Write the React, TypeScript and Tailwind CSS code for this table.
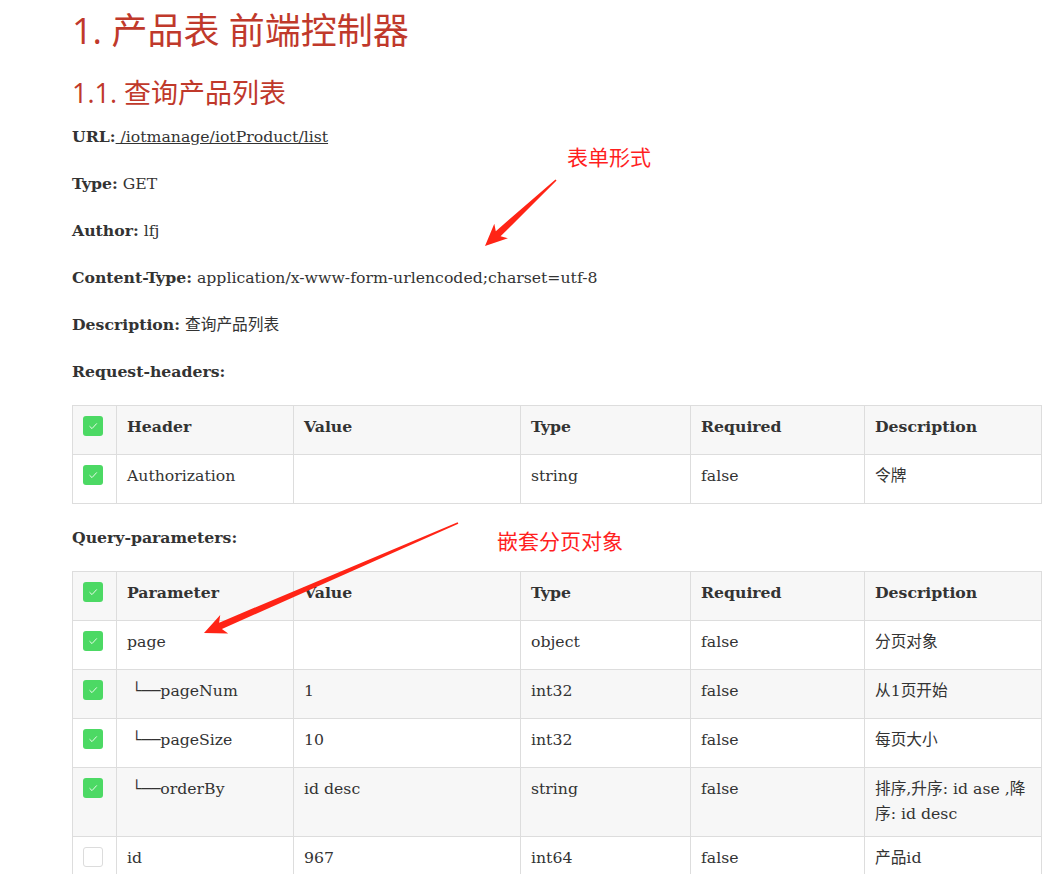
import React from 'react';

const body = "font-['DejaVu_Serif','Noto_Sans_CJK_SC',serif]";
const sans = "font-['Open_Sans','Noto_Sans_CJK_SC',sans-serif]";

type Row = { checked: boolean; cells: string[]; tall?: boolean; indent?: boolean };

const Check = ({ checked }: { checked: boolean }) =>
  checked ? (
    <div className="w-5 h-5 mt-[2px] rounded-[3px] bg-[#4cd964] flex items-center justify-center">
      <svg width="12" height="12" viewBox="0 0 12 12" fill="none">
        <path d="M2.5 6.2 L5 8.6 L9.8 3.4" stroke="#e8fbe9" strokeWidth="1" />
      </svg>
    </div>
  ) : (
    <div className="w-5 h-5 mt-[2px] rounded-[3px] bg-white border border-[#dcdcdc]" />
  );

const ApiTable = ({ head, rows }: { head: string[]; rows: Row[] }) => (
  <div className={`w-[970px] bg-[#dddddd] p-px grid gap-px text-[15.7px] text-[#333] ${body}`}>
    <div className="grid grid-cols-[43px_176px_226px_169px_173px_176px] gap-px h-[48px]">
      <div className="bg-[#f7f7f7] px-[10px] pt-[8px]"><Check checked /></div>
      {head.map((h) => (
        <div key={h} className="bg-[#f7f7f7] px-[10px] pt-[8px] leading-[25px] font-bold">{h}</div>
      ))}
    </div>
    {rows.map((r, i) => {
      const bg = i % 2 === 0 ? 'bg-white' : 'bg-[#f7f7f7]';
      return (
        <div
          key={i}
          className={`grid grid-cols-[43px_176px_226px_169px_173px_176px] gap-px ${r.tall ? 'h-[68px]' : 'h-[48px]'}`}
        >
          <div className={`${bg} px-[10px] pt-[8px]`}><Check checked={r.checked} /></div>
          {r.cells.map((c, j) => (
            <div key={j} className={`${bg} px-[10px] pt-[8px] leading-[25px]`}>
              {j === 0 && r.indent ? <span className="pl-[5px]">└──{c}</span> : c}
            </div>
          ))}
        </div>
      );
    })}
  </div>
);

// red screenshot-style arrow: thin tail, widening shaft, solid head
const Arrow = ({ x1, y1, x2, y2 }: { x1: number; y1: number; x2: number; y2: number }) => {
  const dx = x2 - x1;
  const dy = y2 - y1;
  const len = Math.hypot(dx, dy);
  const ux = dx / len;
  const uy = dy / len;
  const nx = -uy;
  const ny = ux;
  const headLen = 22;
  const headW = 10;
  const neckW = 3.5;
  const tailW = 0.8;
  const bx = x2 - ux * headLen;
  const by = y2 - uy * headLen;
  const pts = [
    [x1 + nx * tailW, y1 + ny * tailW],
    [bx + ux * 4 + nx * neckW, by + uy * 4 + ny * neckW],
    [bx + nx * headW, by + ny * headW],
    [x2, y2],
    [bx - nx * headW, by - ny * headW],
    [bx + ux * 4 - nx * neckW, by + uy * 4 - ny * neckW],
    [x1 - nx * tailW, y1 - ny * tailW],
  ];
  return <polygon points={pts.map((p) => p.join(',')).join(' ')} fill="#ff2416" />;
};

const Field = ({ label, children }: { label: string; children?: React.ReactNode }) => (
  <p className="leading-[24px] mb-[23px]">
    <span className="font-bold">{label}</span> {children}
  </p>
);

export default function App() {
  return (
    <div className={`relative w-[1057px] h-[874px] overflow-hidden bg-white text-[15.7px] text-[#333] ${body}`}>
      <div className="pl-[72px] pt-[9px]">
        <h1 className={`${sans} text-[36px] leading-[44px] text-[#c0392b] font-normal`}>1. 产品表 前端控制器</h1>
        <h2 className={`${sans} text-[27px] leading-[36px] text-[#c0392b] font-normal mt-[22px] mb-[14px]`}>1.1. 查询产品列表</h2>
        <p className="leading-[24px] mb-[23px]">
          <span className="font-bold">URL:</span>
          <a className="underline">&nbsp;/iotmanage/iotProduct/list</a>
        </p>
        <Field label="Type:">GET</Field>
        <Field label="Author:">lfj</Field>
        <Field label="Content-Type:">application/x-www-form-urlencoded;charset=utf-8</Field>
        <Field label="Description:">查询产品列表</Field>
        <p className="leading-[24px] font-bold mb-[21px]">Request-headers:</p>
        <ApiTable
          head={['Header', 'Value', 'Type', 'Required', 'Description']}
          rows={[{ checked: true, cells: ['Authorization', '', 'string', 'false', '令牌'] }]}
        />
        <p className="leading-[24px] font-bold mt-[22px] mb-[21px]">Query-parameters:</p>
        <ApiTable
          head={['Parameter', 'Value', 'Type', 'Required', 'Description']}
          rows={[
            { checked: true, cells: ['page', '', 'object', 'false', '分页对象'] },
            { checked: true, indent: true, cells: ['pageNum', '1', 'int32', 'false', '从1页开始'] },
            { checked: true, indent: true, cells: ['pageSize', '10', 'int32', 'false', '每页大小'] },
            {
              checked: true,
              indent: true,
              tall: true,
              cells: ['orderBy', 'id desc', 'string', 'false', '排序,升序: id ase ,降序: id desc'],
            },
            { checked: false, cells: ['id', '967', 'int64', 'false', '产品id'] },
          ]}
        />
      </div>

      <span className="absolute left-[567px] top-[142px] text-[21px] leading-[28px] text-[#ff1f1f] font-['Noto_Sans_CJK_SC',sans-serif]">
        表单形式
      </span>
      <span className="absolute left-[497px] top-[526px] text-[21px] leading-[28px] text-[#ff1f1f] font-['Noto_Sans_CJK_SC',sans-serif]">
        嵌套分页对象
      </span>
      <svg className="absolute inset-0 pointer-events-none" width="1057" height="874">
        <Arrow x1={556} y1={180} x2={485} y2={246} />
        <Arrow x1={458} y1={523} x2={204} y2={633} />
      </svg>
    </div>
  );
}
